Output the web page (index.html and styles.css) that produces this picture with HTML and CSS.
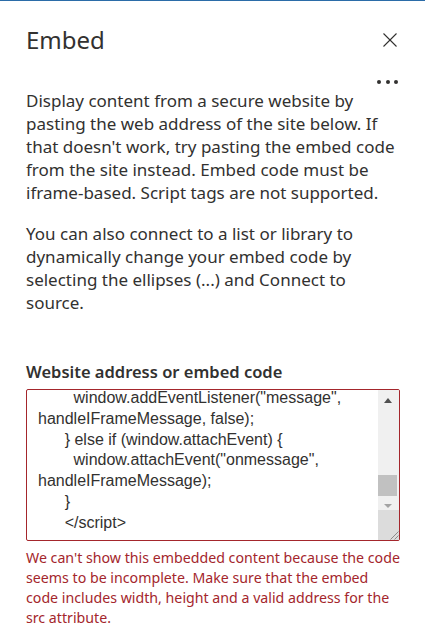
FILE: index.html
```html
<!DOCTYPE html>
<html lang="en">

<head>
    <meta charset="UTF-8">
    <meta name="viewport" content="width=device-width, initial-scale=1.0">
    <title>Embed</title>
    <link rel="stylesheet" href="styles.css">
</head>

<body>
    <div class="panel">
        <!-- Header -->
        <div class="panel-header">
            <h1 class="panel-title">Embed</h1>
            <button class="close-btn" aria-label="Close">
                <svg viewBox="0 0 16 16" width="16" height="16" fill="none" stroke="#323130" stroke-width="1.1">
                    <line x1="1.5" y1="1.5" x2="14.5" y2="14.5"></line>
                    <line x1="14.5" y1="1.5" x2="1.5" y2="14.5"></line>
                </svg>
            </button>
        </div>

        <div class="more-row">
            <span class="more-btn" aria-label="More options">
                <i></i><i></i><i></i>
            </span>
        </div>

        <!-- Description -->
        <p class="desc">Display content from a secure website by pasting the web address of the site below. If that doesn't work, try pasting the embed code from the site instead. Embed code must be iframe-based. Script tags are not supported.</p>
        <p class="desc">You can also connect to a list or library to dynamically change your embed code by selecting the ellipses (...) and Connect to source.</p>

        <!-- Embed code field -->
        <div class="field">
            <label class="field-label">Website address or embed code</label>
            <div class="code-box">
                <div class="code-text">        window.addEventListener("message",
handleIFrameMessage, false);
      } else if (window.attachEvent) {
        window.attachEvent("onmessage",
handleIFrameMessage);
      }
      &lt;/script&gt;</div>
                <div class="scrollbar">
                    <span class="arrow arrow-up"></span>
                    <span class="track"><span class="thumb"></span></span>
                    <span class="arrow arrow-down"></span>
                    <span class="resizer">
                        <svg viewBox="0 0 12 12" width="12" height="12" stroke="#8a8a8a" stroke-width="1">
                            <line x1="11.5" y1="3.5" x2="3.5" y2="11.5"></line>
                            <line x1="11.5" y1="7.5" x2="7.5" y2="11.5"></line>
                        </svg>
                    </span>
                </div>
            </div>
            <p class="error">We can't show this embedded content because the code seems to be incomplete. Make sure that the embed code includes width, height and a valid address for the src attribute.</p>
        </div>
    </div>
</body>

</html>
```

FILE: styles.css
```css
body {
    margin: 0;
    padding: 0;
    font-family: "Noto Sans", "Open Sans", sans-serif;
    color: #323130;
    background: #fff;
}

.panel {
    border-top: 1px solid #2b6ca8;
    padding: 0 25px 0 26px;
    height: 639px;
    overflow: hidden;
}
/* Header */

.panel-header {
    display: flex;
    justify-content: space-between;
    align-items: center;
    padding-top: 23px;
}

.panel-title {
    margin: 0;
    font-size: 24px;
    font-weight: 400;
    line-height: 32px;
}

.close-btn {
    border: none;
    background: none;
    padding: 0;
    margin-right: 2px;
    width: 16px;
    height: 16px;
    display: flex;
}

.more-row {
    display: flex;
    justify-content: flex-end;
    margin-top: 24px;
    height: 4px;
}

.more-btn {
    display: flex;
    gap: 4.5px;
    margin-right: 2px;
}

.more-btn i {
    width: 4px;
    height: 4px;
    border-radius: 50%;
    background: #323130;
}
/* Description */

.desc {
    margin: 5px 0 18px;
    font-size: 17px;
    line-height: 23px;
}

.desc + .desc {
    margin-top: 0;
}
/* Field */

.field {
    margin-top: 47px;
}

.field-label {
    display: block;
    font-size: 16.5px;
    font-weight: 600;
    line-height: 22px;
    margin-bottom: 6px;
}

.code-box {
    display: flex;
    box-sizing: border-box;
    height: 152px;
    border: 1px solid #a4262c;
    border-radius: 2px;
    overflow: hidden;
}

.code-text {
    flex: 1;
    white-space: pre;
    font-family: "Liberation Sans", Arial, sans-serif;
    font-size: 16px;
    line-height: 20.8px;
    margin-top: -2px;
    padding-left: 11px;
    overflow: hidden;
}

.scrollbar {
    width: 21px;
    display: flex;
    flex-direction: column;
    background: #f0f0f0;
}

.arrow {
    display: flex;
    justify-content: center;
    padding-right: 2px;
}

.arrow::before {
    content: "";
    border-left: 4.5px solid transparent;
    border-right: 4.5px solid transparent;
}

.arrow-up {
    height: 20px;
    align-items: center;
}

.arrow-up::before {
    border-bottom: 5px solid #505050;
}

.arrow-down {
    height: 16px;
    align-items: flex-end;
    padding-bottom: 2px;
    box-sizing: border-box;
}

.arrow-down::before {
    border-top: 4px solid #a3a3a3;
}

.track {
    flex: 1;
    position: relative;
}

.thumb {
    position: absolute;
    left: 0;
    right: 2px;
    top: 65px;
    height: 21px;
    background: #c1c1c1;
}

.resizer {
    height: 30px;
    background: #dcdcdc;
    display: flex;
    align-items: flex-end;
    justify-content: flex-end;
}

.error {
    margin: 7px 0 0;
    font-size: 14.2px;
    line-height: 20px;
    color: #a4262c;
}
```
